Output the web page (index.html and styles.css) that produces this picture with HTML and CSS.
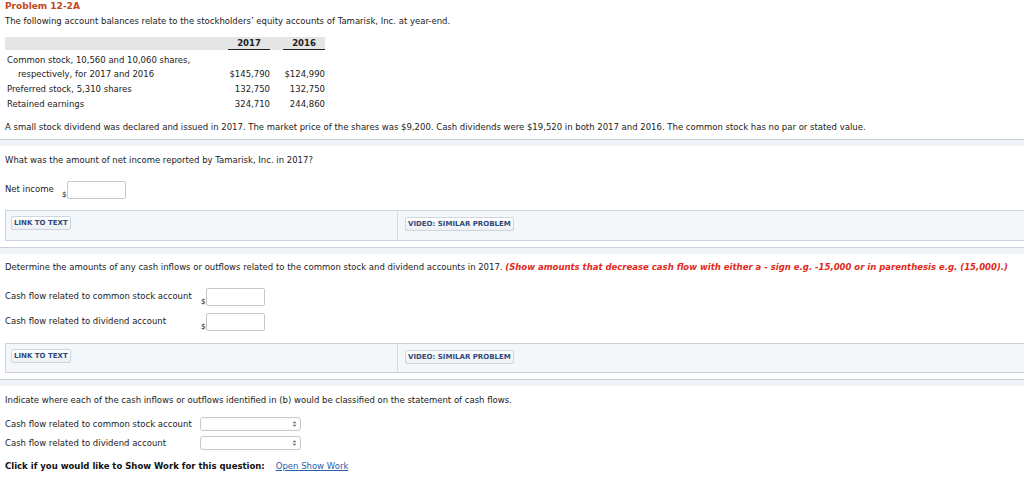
FILE: index.html
```html
<!DOCTYPE html>
<html>
<head>
<meta charset="utf-8">
<link rel="stylesheet" href="styles.css">
</head>
<body>
<div class="intro">
  <div class="title">Problem 12-2A</div>
  <p class="lead">The following account balances relate to the stockholders’ equity accounts of Tamarisk, Inc. at year-end.</p>
  <table class="bal">
    <thead>
      <tr><th class="lbl"></th><th><span>2017</span></th><th><span>2016</span></th></tr>
    </thead>
    <tbody>
      <tr class="r1"><td class="lbl">Common stock, 10,560 and 10,060 shares,</td><td></td><td></td></tr>
      <tr class="r2"><td class="lbl ind">respectively, for 2017 and 2016</td><td>$145,790</td><td>$124,990</td></tr>
      <tr class="r3"><td class="lbl">Preferred stock, 5,310 shares</td><td>132,750</td><td>132,750</td></tr>
      <tr class="r3"><td class="lbl">Retained earnings</td><td>324,710</td><td>244,860</td></tr>
    </tbody>
  </table>
  <p class="para">A small stock dividend was declared and issued in 2017. The market price of the shares was $9,200. Cash dividends were $19,520 in both 2017 and 2016. The common stock has no par or stated value.</p>
</div>

<div class="sep"></div>

<section class="part pa">
  <p class="q">What was the amount of net income reported by Tamarisk, Inc. in 2017?</p>
  <div class="field ni">
    <span class="flabel">Net income</span>
    <span class="dollar">$</span>
    <span class="inp"></span>
  </div>
  <div class="linkbox">
    <div class="lcell"><span class="btn">LINK TO TEXT</span></div>
    <div class="rcell"><span class="btn">VIDEO: SIMILAR PROBLEM</span></div>
  </div>
</section>

<div class="sep"></div>

<section class="part pb">
  <p class="q">Determine the amounts of any cash inflows or outflows related to the common stock and dividend accounts in 2017. <em class="warn">(Show amounts that decrease cash flow with either a - sign e.g. -15,000 or in parenthesis e.g. (15,000).)</em></p>
  <div class="field cf1">
    <span class="flabel w2">Cash flow related to common stock account</span>
    <span class="dollar">$</span>
    <span class="inp"></span>
  </div>
  <div class="field cf2">
    <span class="flabel w2">Cash flow related to dividend account</span>
    <span class="dollar">$</span>
    <span class="inp"></span>
  </div>
  <div class="linkbox lb2">
    <div class="lcell"><span class="btn">LINK TO TEXT</span></div>
    <div class="rcell"><span class="btn">VIDEO: SIMILAR PROBLEM</span></div>
  </div>
</section>

<div class="sep"></div>

<section class="part pc">
  <p class="q">Indicate where each of the cash inflows or outflows identified in (b) would be classified on the statement of cash flows.</p>
  <div class="srow s1">
    <span class="slabel">Cash flow related to common stock account</span>
    <span class="sel"><svg width="5" height="8" viewBox="0 0 5 8"><path d="M0.6 3.3 L2.5 1.2 L4.4 3.3 Z M0.6 4.7 L2.5 6.8 L4.4 4.7 Z" fill="#666"/></svg></span>
  </div>
  <div class="srow">
    <span class="slabel">Cash flow related to dividend account</span>
    <span class="sel"><svg width="5" height="8" viewBox="0 0 5 8"><path d="M0.6 3.3 L2.5 1.2 L4.4 3.3 Z M0.6 4.7 L2.5 6.8 L4.4 4.7 Z" fill="#666"/></svg></span>
  </div>
  <p class="show"><b>Click if you would like to Show Work for this question:</b><a class="open" href="#">Open Show Work</a></p>
</section>
</body>
</html>
```

FILE: styles.css
```css
html, body {
  margin: 0;
  padding: 0;
  background: #fff;
}
body {
  font-family: "DejaVu Sans", Verdana, sans-serif;
  font-size: 8.5px;
  color: #222;
  line-height: 10px;
  overflow: hidden;
}
p { margin: 0; }

.intro { padding: 0 5px; }
.title {
  color: #c4471c;
  font-weight: bold;
  font-size: 9px;
  padding-top: 1px;
  line-height: 10px;
}
.lead { margin-top: 5px; }

.bal {
  border-collapse: collapse;
  margin-top: 11px;
  width: 320px;
}
.bal th {
  background: #e5e5e5;
  height: 13px;
  padding: 0;
  vertical-align: bottom;
  text-align: right;
  font-weight: bold;
}
.bal th span {
  display: block;
  border-bottom: 1px solid #222;
  text-align: center;
  margin-left: 13px;
  line-height: 11px;
}
.bal th.lbl { width: 210px; }
.bal td {
  padding: 0;
  text-align: right;
  white-space: nowrap;
}
.bal td.lbl {
  text-align: left;
  padding-left: 2px;
}
.bal td.ind { padding-left: 13px; }
.bal tr.r1 td { height: 15px; vertical-align: bottom; }
.bal tr.r2 td { height: 14px; vertical-align: bottom; }
.bal tr.r3 td { height: 15px; vertical-align: bottom; }

.para { margin-top: 13px; }

.sep {
  margin-top: 7px;
  border-top: 1px solid #c9d0d8;
  height: 6px;
  background: #f0f3f7;
}
.part + .sep { margin-top: 6px; }

.part { padding: 0 5px; }
.q { margin-top: 9px; }
.pb .q { margin-top: 8px; }
.pc .q { margin-top: 9px; }
.warn {
  color: #e02a20;
  font-weight: bold;
}

.field {
  display: flex;
  align-items: flex-start;
}
.flabel { line-height: 10px; padding-top: 3px; }
.ni { margin-top: 16px; }
.ni .flabel { width: 57px; }
.w2 { width: 196px; }
.dollar {
  font-size: 7.5px;
  line-height: 8px;
  padding-top: 10px;
  width: 5px;
}
.inp {
  display: block;
  width: 57px;
  height: 16px;
  border: 1px solid #c8c8c8;
  border-radius: 2px;
  background: #fff;
}
.cf1 { margin-top: 16px; }
.cf2 { margin-top: 7px; }

.linkbox {
  display: flex;
  margin-top: 11px;
  margin-right: -5px;
  height: 31px;
  border-top: 1px solid #cdd3dc;
  border-bottom: 1px solid #cdd3dc;
  border-left: 1px solid #cdd3dc;
  background: #f4f7fa;
  box-sizing: border-box;
}
.lb2 { margin-top: 12px; height: 30px; }
.lcell {
  width: 392px;
  border-right: 1px solid #d6dce3;
  padding: 5px 0 0 5px;
  box-sizing: border-box;
}
.rcell {
  padding: 6px 0 0 7px;
}
.btn {
  display: inline-block;
  font-size: 7px;
  font-weight: bold;
  color: #2f4a7a;
  border: 1px solid #cfd5dd;
  border-radius: 2px;
  background: linear-gradient(#ffffff, #edf0f4);
  padding: 0 2px;
  line-height: 12px;
  height: 12px;
}

.srow {
  display: flex;
  align-items: center;
  margin-top: 5px;
}
.s1 { margin-top: 12px; }
.slabel { width: 195px; }
.sel {
  display: flex;
  justify-content: flex-end;
  align-items: center;
  width: 101px;
  height: 14px;
  border: 1px solid #c8c8c8;
  border-radius: 3px;
  box-sizing: border-box;
  padding-right: 3px;
  background: #fff;
}
.show { margin-top: 11px; }
.show b { color: #111; }
.open {
  margin-left: 11px;
  color: #2a5ea8;
  text-decoration: underline;
}
```
